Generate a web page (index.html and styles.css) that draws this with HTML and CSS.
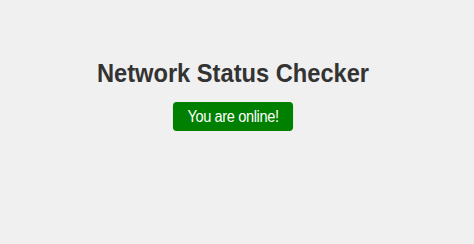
FILE: index.html
```html
<!DOCTYPE html>
<html>
<head>
<meta charset="utf-8">
<link rel="stylesheet" href="styles.css">
</head>
<body>
<div class="container">
  <h1 class="title">Network Status Checker</h1>
  <div class="status online">You are online!</div>
</div>
</body>
</html>
```
FILE: styles.css
```css
html, body {
  margin: 0;
  padding: 0;
}
body {
  background: #f0f0f0;
  font-family: "Liberation Sans", Arial, sans-serif;
  color: #333;
  text-align: center;
}
.container {
  padding: 58px 8px 0 0;
  transform: scaleX(0.91);
  transform-origin: 233px 0;
}
.title {
  font-size: 26px;
  font-weight: bold;
  line-height: 30px;
  margin: 0 0 14px;
}
.status {
  display: inline-block;
  padding: 5px 16px;
  font-size: 16px;
  line-height: 19px;
  letter-spacing: -0.4px;
  border-radius: 4px;
  color: #fff;
}
.online {
  background: #008000;
}
```
